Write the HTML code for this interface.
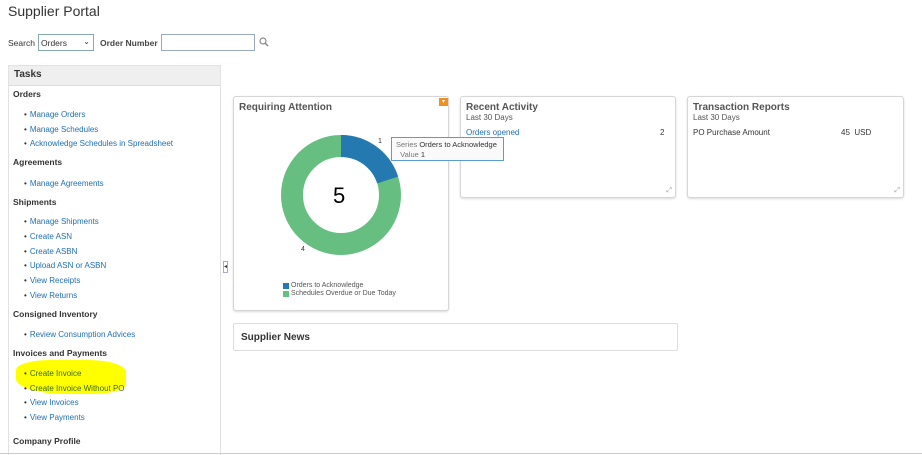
<!DOCTYPE html>
<html><head><meta charset="utf-8"><style>
*{margin:0;padding:0;box-sizing:border-box}
body{width:922px;height:455px;background:#fff;font-family:"Liberation Sans",Arial,sans-serif;position:relative;overflow:hidden;color:#333}
.a{position:absolute;white-space:nowrap}
.h{font-size:8.5px;font-weight:bold;color:#333;left:13px}
.l{font-size:8px;color:#1f6fb2;left:24px}
.l:before{content:"•";color:#333;margin-right:3px}
.card{position:absolute;border:1px solid #d6d6d6;border-radius:3px;background:#fff;box-shadow:0 1px 2px rgba(0,0,0,.15)}
.ct{font-size:10px;font-weight:bold;color:#555}
.sub{font-size:8px;color:#555}
</style></head><body>
<div class="a" style="left:8px;top:3px;font-size:14px;color:#333">Supplier Portal</div>
<div class="a" style="left:8px;top:38px;font-size:8.5px;color:#333">Search</div>
<div class="a" style="left:38px;top:34px;width:56px;height:17px;border:1px solid #8aa;font-size:8.5px;padding:3px 2px">Orders<span style="position:absolute;right:3px;top:2px;font-size:8px">⌄</span></div>
<div class="a" style="left:100px;top:38px;font-size:8.5px;font-weight:bold;color:#444">Order Number</div>
<div class="a" style="left:161px;top:34px;width:94px;height:17px;border:1px solid #9ab"></div>
<svg class="a" style="left:259px;top:37px" width="10" height="10"><circle cx="4" cy="4" r="3" fill="none" stroke="#888" stroke-width="1.2"/><line x1="6.2" y1="6.2" x2="9" y2="9" stroke="#888" stroke-width="1.5"/></svg>

<div class="a" style="left:8px;top:65px;width:213px;height:390px;border:1px solid #e2e2e2;border-bottom:none"></div>
<div class="a" style="left:9px;top:66px;width:211px;height:20px;background:#efefef;border-bottom:1px solid #ddd"></div>
<div class="a" style="left:14px;top:69px;font-size:10px;font-weight:bold;color:#333">Tasks</div>
<div class="a" style="left:0;top:453px;width:922px;height:1px;background:#ccc"></div>

<div class="a h" style="top:89px">Orders</div>
<div class="a l" style="top:110px">Manage Orders</div>
<div class="a l" style="top:125px">Manage Schedules</div>
<div class="a l" style="top:139px">Acknowledge Schedules in Spreadsheet</div>
<div class="a h" style="top:157px">Agreements</div>
<div class="a l" style="top:179px">Manage Agreements</div>
<div class="a h" style="top:197px">Shipments</div>
<div class="a l" style="top:217px">Manage Shipments</div>
<div class="a l" style="top:232px">Create ASN</div>
<div class="a l" style="top:247px">Create ASBN</div>
<div class="a l" style="top:261px">Upload ASN or ASBN</div>
<div class="a l" style="top:276px">View Receipts</div>
<div class="a l" style="top:291px">View Returns</div>
<div class="a h" style="top:309px">Consigned Inventory</div>
<div class="a l" style="top:330px">Review Consumption Advices</div>
<div class="a h" style="top:348px">Invoices and Payments</div>
<div class="a" style="left:16px;top:360px;width:110px;height:34px;background:#ffff00;border-radius:30% 35% 30% 45%"></div>
<div class="a l" style="top:369px;color:#3a6a10">Create Invoice</div>
<div class="a l" style="top:384px;color:#3a6a10">Create Invoice Without PO</div>
<div class="a l" style="top:398px">View Invoices</div>
<div class="a l" style="top:413px">View Payments</div>
<div class="a h" style="top:436px">Company Profile</div>

<div class="a" style="left:223px;top:261px;width:5px;height:12px;border:1px solid #aac;background:#fff;font-size:6px;line-height:10px">◂</div>

<div class="card" style="left:233px;top:96px;width:216px;height:215px">
<div class="a ct" style="left:5px;top:5px">Requiring Attention</div>
<div class="a" style="left:205px;top:1px;width:9px;height:8px;background:#f0901e;color:#fff;font-size:6px;text-align:center;line-height:8px">▾</div>
<svg class="a" style="left:46px;top:37px" width="122" height="122"><g transform="rotate(-90 61 61)"><circle cx="61" cy="61" r="49" fill="none" stroke="#66bf80" stroke-width="22"/><circle cx="61" cy="61" r="49" fill="none" stroke="#2479b0" stroke-width="22" stroke-dasharray="61.6 400"/></g></svg>
<div class="a" style="left:99px;top:86px;font-size:22px;color:#000">5</div>
<div class="a" style="left:144px;top:41px;font-size:7px">1</div>
<div class="a" style="left:67px;top:149px;font-size:7px">4</div>
<div class="a" style="left:49px;top:186px;width:6px;height:6px;background:#2479b0"></div>
<div class="a sub" style="left:57px;top:185px;font-size:7px">Orders to Acknowledge</div>
<div class="a" style="left:49px;top:194px;width:6px;height:6px;background:#66bf80"></div>
<div class="a sub" style="left:57px;top:193px;font-size:7px">Schedules Overdue or Due Today</div>
</div>

<div class="card" style="left:460px;top:96px;width:216px;height:102px">
<div class="a ct" style="left:5px;top:5px">Recent Activity</div>
<div class="a sub" style="left:5px;top:16px">Last 30 Days</div>
<div class="a" style="left:5px;top:31px;font-size:8px;color:#1f6fb2">Orders opened</div>
<div class="a" style="left:199px;top:31px;font-size:8px">2</div>
<div class="a" style="right:3px;bottom:2px;font-size:7px;color:#999">⤢</div>
</div>
<div class="card" style="left:687px;top:96px;width:217px;height:102px">
<div class="a ct" style="left:5px;top:5px">Transaction Reports</div>
<div class="a sub" style="left:5px;top:16px">Last 30 Days</div>
<div class="a" style="left:5px;top:31px;font-size:8px">PO Purchase Amount</div>
<div class="a" style="left:153px;top:31px;font-size:8px">45 &nbsp;USD</div>
<div class="a" style="right:3px;bottom:2px;font-size:7px;color:#999">⤢</div>
</div>

<div class="a" style="left:391px;top:137px;width:113px;height:24px;background:#fafafa;border:1px solid #5b9bd0;font-size:7.5px;padding:2px 4px;line-height:10px"><span style="color:#777">Series</span> Orders to Acknowledge<br>&nbsp;&nbsp;<span style="color:#777">Value</span> 1</div>

<div class="a" style="left:233px;top:323px;width:445px;height:28px;border:1px solid #ddd;border-radius:2px"><div class="a ct" style="left:7px;top:8px;color:#333">Supplier News</div></div>
</body></html>
